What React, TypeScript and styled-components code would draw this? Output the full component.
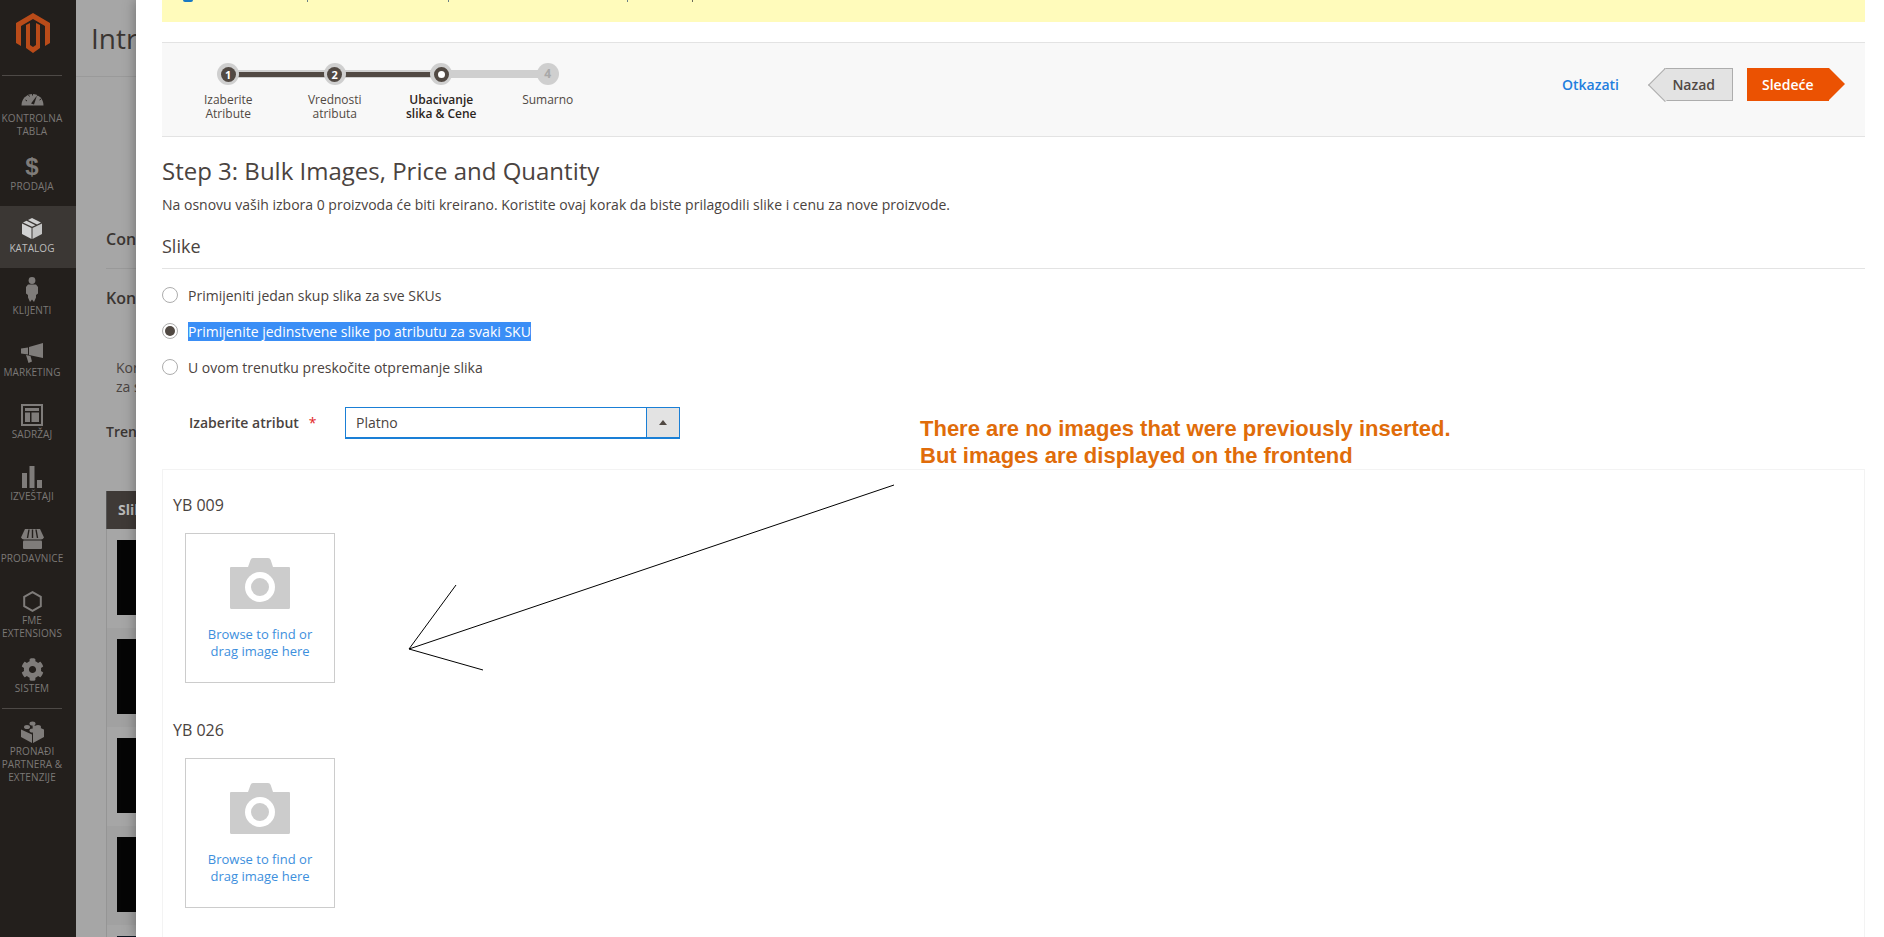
import React from "react";
import styled, { createGlobalStyle } from "styled-components";
import { FaCog } from "react-icons/fa";

const Global = createGlobalStyle`
  html, body { margin: 0; padding: 0; height: 937px; overflow: hidden; background: #fff; }
  * { box-sizing: border-box; }
  body { font-family: "Open Sans", "Noto Sans", sans-serif; color: #4a4340; }
`;

const Root = styled.div`
  position: relative;
  display: flex;
  width: 1884px;
  height: 937px;
  overflow: hidden;
`;

/* ---------- sidebar ---------- */
const Sidebar = styled.nav`
  width: 76px;
  flex: none;
  background: #231f1c;
  display: flex;
  flex-direction: column;
`;
const LogoBox = styled.div`
  height: 75px;
  padding: 13px 0 0 15px;
`;
const Divider = styled.div`
  height: 1px;
  margin: 0 14px 0 2px;
  background: #4d4946;
`;
const NavItem = styled.div<{ $active?: boolean; $tall?: boolean }>`
  height: ${(p) => (p.$tall ? 68 : 62)}px;
  width: 76px;
  flex: none;
  padding: 10px 12px 0 0;
  background: ${(p) => (p.$active ? "#3b3734" : "transparent")};
  color: ${(p) => (p.$active ? "#bdbdbd" : "#7b7876")};
  text-align: center;
  font-size: 10px;
  line-height: 13px;
  letter-spacing: 0.1px;
`;
const NavIcon = styled.div<{ $shift?: number }>`
  height: 26px;
  display: flex;
  align-items: center;
  justify-content: center;
  transform: translateY(${(p) => p.$shift ?? 0}px);
`;
const Dollar = styled.span`
  font-family: "Liberation Sans", sans-serif;
  font-weight: 700;
  font-size: 24px;
  line-height: 26px;
  color: #7f7c7a;
`;

/* ---------- dim page behind ---------- */
const Behind = styled.div`
  width: 60px;
  flex: none;
  background: #a6a6a6;
  overflow: hidden;
  color: #3a3532;
  white-space: nowrap;
`;
const BehindHeader = styled.div`
  height: 77px;
  padding: 18px 0 0 15px;
  border-bottom: 1px solid #9a9a9a;
  font-size: 28px;
  line-height: 40px;
`;
const BehindBold = styled.div<{ $first?: boolean }>`
  padding-left: 30px;
  margin-top: ${(p) => (p.$first ? 150 : 0)}px;
  font-weight: 600;
  font-size: 16px;
  line-height: 24px;
`;
const BehindRule = styled.div`
  margin: 17px 0 17px 30px;
  height: 1px;
  background: #999;
`;
const BehindText = styled.div`
  padding-left: 40px;
  margin-top: 48px;
  font-size: 14px;
  line-height: 19px;
  color: #4a4441;
`;
const BehindSub = styled.div`
  padding-left: 30px;
  margin-top: 26px;
  font-weight: 600;
  font-size: 14px;
  line-height: 20px;
`;
const BehindHead = styled.div`
  margin: 49px 0 0 30px;
  height: 38px;
  padding: 9px 0 0 11px;
  background: #3f3a37;
  border-left: 1px solid #555;
  color: #b9b9b9;
  font-size: 14px;
  font-weight: 700;
  line-height: 20px;
`;
const BehindRow = styled.div<{ $alt?: boolean }>`
  margin-left: 30px;
  height: 99px;
  padding: 11px 0 0 10px;
  border-left: 1px solid #959595;
  background: ${(p) => (p.$alt ? "#a1a1a1" : "#a6a6a6")};
`;
const BehindThumb = styled.div<{ $navy?: boolean }>`
  width: 60px;
  height: 75px;
  background: ${(p) => (p.$navy ? "#0c1520" : "#050505")};
`;

/* ---------- modal ---------- */
const Modal = styled.main`
  flex: 1;
  min-width: 0;
  background: #fff;
  padding: 0 19px 0 26px;
  box-shadow: 0 0 12px rgba(0, 0, 0, 0.35);
  z-index: 1;
`;
const Banner = styled.div`
  position: relative;
  height: 22px;
  background: #fffbbb;
`;
const BannerMark = styled.i<{ $x: number; $wide?: boolean; $c: string }>`
  position: absolute;
  top: 0;
  left: ${(p) => p.$x}px;
  width: ${(p) => (p.$wide ? 10 : 1)}px;
  height: 2px;
  background: ${(p) => p.$c};
  border-radius: ${(p) => (p.$wide ? "0 0 5px 5px" : 0)};
`;
const Wizard = styled.section`
  margin-top: 20px;
  height: 95px;
  background: #f8f8f8;
  border-top: 1px solid #e3e3e3;
  border-bottom: 1px solid #e3e3e3;
  display: flex;
  justify-content: space-between;
  padding: 20px 20px 0 13px;
`;
const Steps = styled.ol`
  display: flex;
  list-style: none;
  margin: 0;
  padding: 0;
`;
const Step = styled.li<{ $current?: boolean; $last?: boolean; $fill?: boolean }>`
  position: relative;
  width: 106.5px;
  display: flex;
  flex-direction: column;
  align-items: center;
  text-align: center;
  font-size: 12px;
  line-height: 14px;
  color: ${(p) => (p.$current ? "#2c2521" : "#514943")};
  font-weight: ${(p) => (p.$current ? 600 : 400)};
  &::before {
    content: "";
    display: ${(p) => (p.$last ? "none" : "block")};
    position: absolute;
    top: 7px;
    left: 50%;
    width: 100%;
    height: 8px;
    background: #cfcfcf;
  }
  &::after {
    content: "";
    display: ${(p) => (p.$fill ? "block" : "none")};
    position: absolute;
    top: 9px;
    left: 50%;
    width: 100%;
    height: 5px;
    background: #514943;
  }
`;
const Dot = styled.span`
  position: relative;
  z-index: 1;
  width: 22px;
  height: 22px;
  border-radius: 50%;
  background: #cfcfcf;
  display: flex;
  align-items: center;
  justify-content: center;
  margin-bottom: 8px;
`;
const DotInner = styled.span<{ $ring?: boolean }>`
  width: 15px;
  height: 15px;
  border-radius: 50%;
  background: ${(p) => (p.$ring ? "#fff" : "#514943")};
  border: ${(p) => (p.$ring ? "4px solid #514943" : "none")};
  color: #fff;
  font-size: 11px;
  line-height: 15px;
  font-weight: 700;
  text-align: center;
`;
const DotGhost = styled.span`
  color: #a8a8a8;
  font-size: 12px;
  font-weight: 700;
  line-height: 22px;
`;
const Actions = styled.div`
  display: flex;
  align-items: center;
  height: 33px;
  margin-top: 5px;
`;
const CancelLink = styled.a`
  color: #1f7ede;
  font-size: 14px;
  font-weight: 600;
  margin-right: 45px;
`;
const BackBtn = styled.div`
  position: relative;
  width: 69px;
  height: 33px;
  margin-right: 14px;
  background: #e3e3e3;
  border: 1px solid #adadad;
  border-left: none;
  color: #514943;
  font-size: 14px;
  font-weight: 600;
  line-height: 31px;
  text-align: right;
  padding-right: 17px;
  &::before {
    content: "";
    position: absolute;
    left: -11px;
    top: 4px;
    width: 23px;
    height: 23px;
    background: #e3e3e3;
    border-left: 1px solid #adadad;
    border-bottom: 1px solid #adadad;
    transform: rotate(45deg);
  }
`;
const BackLabel = styled.span`
  position: relative;
`;
const NextBtn = styled.div`
  position: relative;
  width: 82px;
  height: 33px;
  margin-right: 16px;
  background: #eb5202;
  color: #fff;
  font-size: 14px;
  font-weight: 600;
  line-height: 33px;
  padding-left: 15px;
  &::after {
    content: "";
    position: absolute;
    right: -16px;
    top: 0;
    border-left: 16px solid #eb5202;
    border-top: 16.5px solid transparent;
    border-bottom: 16.5px solid transparent;
  }
`;
const Heading = styled.h1`
  margin: 17px 0 0;
  font-size: 24px;
  line-height: 34px;
  font-weight: 400;
  color: #4a4340;
`;
const Lead = styled.p`
  margin: 7px 0 0;
  font-size: 14px;
  line-height: 20px;
`;
const SectionTitle = styled.h2`
  margin: 19px 0 0;
  padding-bottom: 10px;
  border-bottom: 1px solid #e3e3e3;
  font-size: 18px;
  line-height: 24px;
  font-weight: 400;
`;
const RadioList = styled.div`
  margin-top: 8px;
`;
const RadioRow = styled.div`
  height: 36px;
  display: flex;
  align-items: center;
  font-size: 14px;
`;
const Radio = styled.span<{ $on?: boolean }>`
  width: 16px;
  height: 16px;
  flex: none;
  border-radius: 50%;
  border: 1px solid #adadad;
  background: #fff;
  margin-right: 10px;
  display: flex;
  align-items: center;
  justify-content: center;
  &::after {
    content: "";
    display: ${(p) => (p.$on ? "block" : "none")};
    width: 10px;
    height: 10px;
    border-radius: 50%;
    background: #514943;
  }
`;
const Selected = styled.span`
  background: #3a8ef6;
  color: #fff;
  line-height: 19px;
`;
const AttrRow = styled.div`
  margin-top: 22px;
  display: flex;
  align-items: center;
  padding-left: 27px;
`;
const AttrLabel = styled.label`
  width: 156px;
  font-size: 14px;
  font-weight: 600;
`;
const Required = styled.span`
  color: #e22626;
  margin-left: 10px;
  font-weight: 400;
`;
const SelectBox = styled.div`
  width: 335px;
  height: 31px;
  border: 1px solid #1a7fd6;
  box-shadow: 0 1px 0 #1a7fd6;
  display: flex;
  align-items: center;
  font-size: 14px;
`;
const SelectValue = styled.span`
  flex: 1;
  padding-left: 10px;
`;
const SelectArrow = styled.span`
  width: 33px;
  height: 100%;
  background: #e3e3e3;
  border-left: 1px solid #1a7fd6;
  display: flex;
  align-items: center;
  justify-content: center;
  &::after {
    content: "";
    border-left: 4px solid transparent;
    border-right: 4px solid transparent;
    border-bottom: 5px solid #514943;
  }
`;
const Matrix = styled.section`
  margin-top: 31px;
  height: 500px;
  border: 1px solid #f3f3f3;
  padding: 24px 0 0 10px;
`;
const SkuTitle = styled.div<{ $next?: boolean }>`
  font-size: 16px;
  line-height: 22px;
  margin-top: ${(p) => (p.$next ? 36 : 0)}px;
`;
const Tile = styled.div`
  width: 150px;
  height: 150px;
  margin: 17px 0 0 12px;
  border: 1px solid #ccc;
  padding-top: 24px;
  display: flex;
  flex-direction: column;
  align-items: center;
  text-align: center;
  color: #3d8fdd;
  font-size: 13px;
  line-height: 17px;
`;
const TileText = styled.div`
  margin-top: 17px;
`;
const Annotation = styled.div`
  position: absolute;
  left: 920px;
  top: 415px;
  z-index: 3;
  font-family: "Liberation Sans", Arial, sans-serif;
  font-weight: 700;
  font-size: 22px;
  line-height: 27px;
  color: #e06c0a;
  white-space: nowrap;
`;
const ArrowLayer = styled.svg`
  position: absolute;
  left: 0;
  top: 0;
  z-index: 3;
  pointer-events: none;
`;

/* ---------- drawings ---------- */
const Logo = () => (
  <svg width="36" height="40" viewBox="0 0 36 40" fill="#b94b19">
    <path d="M18 0L35 10V30L30 33V13L18 6L6 13V33L1 30V10Z" />
    <path d="M11 12L15 10V32L18 34L21 32V10L25 12V35L18 40L11 35Z" />
  </svg>
);
const ic = "#7f7c7a";
const Gauge = () => (
  <svg width="23" height="17" viewBox="0 0 23 17">
    <path d="M0.5 16.5A11 11.5 0 0 1 22.5 16.5Z" fill={ic} />
    <path d="M10 14.5L16 6.5L13 15.5Z" fill="#231f1c" />
    <path d="M4.5 11L6 12M7.5 6l1 1.5M11.5 4.5v2M16.5 7l1-1.5M18.5 11l1.5-1" stroke="#231f1c" strokeWidth="1" />
  </svg>
);
const BoxIcon = () => (
  <svg width="20" height="21" viewBox="0 0 20 21">
    <path d="M0 5.5L9.5 10V21L0 16Z" fill="#d2d2d2" />
    <path d="M20 5.5L10.5 10V21L20 16Z" fill="#c4c4c4" />
    <path d="M10 0L6 2L15 6.5L19 4.5ZM4.5 2.7L1 4.5L10 8.8L13.5 7.2Z" fill="#cfcfcf" />
  </svg>
);
const Person = () => (
  <svg width="12" height="25" viewBox="0 0 12 25" fill={ic}>
    <circle cx="6" cy="3.5" r="3.4" />
    <path d="M2 7.5H10L12 10V16.5L10 18V20.5L8 25L6 22.5L4 25L2 20.5V18L0 16.5V10Z" />
  </svg>
);
const Megaphone = () => (
  <svg width="22" height="20" viewBox="0 0 22 20" fill={ic}>
    <path d="M22 0V15L8 12V4Z" />
    <path d="M0 5.5L7 4.5V11.5L0 10.5Z" />
    <path d="M5 12L9.5 13L11 18.5L7.5 20Z" />
  </svg>
);
const Layout = () => (
  <svg width="22" height="22" viewBox="0 0 22 22" fill="none" stroke={ic}>
    <rect x="1" y="1" width="20" height="20" strokeWidth="2" />
    <rect x="4" y="4" width="14" height="3" fill={ic} stroke="none" />
    <rect x="4" y="8.5" width="5" height="9.5" fill={ic} stroke="none" />
    <rect x="10.5" y="8.5" width="7.5" height="9.5" fill={ic} stroke="none" />
  </svg>
);
const Bars = () => (
  <svg width="20" height="22" viewBox="0 0 20 22" fill={ic}>
    <rect x="0" y="7" width="5" height="15" />
    <rect x="7.5" y="0" width="5" height="22" />
    <rect x="15" y="14" width="5" height="8" />
  </svg>
);
const Store = () => (
  <svg width="23" height="20" viewBox="0 0 23 20" fill={ic}>
    <path d="M4 0H19L23 8.5Q22 10.5 20 10.5H3Q1 10.5 0 8.5Z" />
    <path d="M8 0.5L6.5 9M11.5 0.5V9M15 0.5L16.5 9" stroke="#231f1c" strokeWidth="1.4" fill="none" />
    <rect x="2" y="11.5" width="19" height="8.5" rx="1" />
  </svg>
);
const Hexagon = () => (
  <svg width="19" height="21" viewBox="0 0 19 21" fill="none" stroke={ic} strokeWidth="2">
    <path d="M9.5 1.2L17.8 5.9V15.1L9.5 19.8L1.2 15.1V5.9Z" />
  </svg>
);
const Lego = () => (
  <svg width="23" height="22" viewBox="0 0 23 22" fill={ic}>
    <path d="M11.5 3.5L23 8.5V16L12 22V13.5Z" />
    <path d="M0 8.5V16L11 22V13.5Z" />
    <ellipse cx="11.5" cy="2.5" rx="3" ry="2" />
    <ellipse cx="6" cy="6" rx="3" ry="2" />
    <ellipse cx="17" cy="6" rx="3" ry="2" />
    <ellipse cx="11.5" cy="9.5" rx="3" ry="2" />
  </svg>
);
const Camera = () => (
  <svg width="60" height="51" viewBox="0 0 60 51">
    <path d="M1 9H18L20.5 2Q21.2 0 23 0H38Q40 0 40.7 2L43 9H59Q60 9 60 10V49.5Q60 51 58.5 51H1.5Q0 51 0 49.5V10Q0 9 1 9Z" fill="#ccc" />
    <circle cx="30" cy="29" r="15" fill="#fff" />
    <circle cx="30" cy="29" r="9" fill="#ccc" />
  </svg>
);

const nav: { label: React.ReactNode; icon: React.ReactNode; tall?: boolean; active?: boolean; shift?: number }[] = [
  { label: <>KONTROLNA<br />TABLA</>, icon: <Gauge />, tall: true, shift: -2 },
  { label: "PRODAJA", icon: <Dollar>$</Dollar> },
  { label: "KATALOG", icon: <BoxIcon />, active: true, shift: -1 },
  { label: "KLIJENTI", icon: <Person />, shift: -2 },
  { label: "MARKETING", icon: <Megaphone />, shift: 0 },
  { label: "SADRŽAJ", icon: <Layout />, shift: 0 },
  { label: "IZVEŠTAJI", icon: <Bars />, shift: 0 },
  { label: "PRODAVNICE", icon: <Store />, shift: 0 },
  { label: <>FME<br />EXTENSIONS</>, icon: <Hexagon />, tall: true },
  { label: "SISTEM", icon: <FaCog size={23} color={ic} />, shift: 0 },
];

const skus = ["YB 009", "YB 026"];

function NavRow({ label, icon, tall, active, shift }: { label: React.ReactNode; icon: React.ReactNode; tall?: boolean; active?: boolean; shift?: number }) {
  return (
    <NavItem $tall={tall} $active={active}>
      <NavIcon $shift={shift}>{icon}</NavIcon>
      {label}
    </NavItem>
  );
}

export default function App() {
  return (
    <Root>
      <Global />
      <Sidebar>
        <LogoBox><Logo /></LogoBox>
        <Divider />
        {nav.map((n, i) => (
          <NavRow key={i} {...n} />
        ))}
        <Divider />
        <NavRow label={<>PRONAĐI<br />PARTNERA &amp;<br />EXTENZIJE</>} icon={<Lego />} tall />
      </Sidebar>

      <Behind>
        <BehindHeader>Intr</BehindHeader>
        <BehindBold $first>Con</BehindBold>
        <BehindRule />
        <BehindBold>Kon</BehindBold>
        <BehindText>Kor<br />za s</BehindText>
        <BehindSub>Tren</BehindSub>
        <BehindHead>Slik</BehindHead>
        <BehindRow><BehindThumb /></BehindRow>
        <BehindRow $alt><BehindThumb /></BehindRow>
        <BehindRow><BehindThumb /></BehindRow>
        <BehindRow $alt><BehindThumb /></BehindRow>
        <BehindRow><BehindThumb $navy /></BehindRow>
      </Behind>

      <Modal>
        <Banner>
          <BannerMark $x={21} $wide $c="#1979c3" />
          <BannerMark $x={145} $c="#6a7f86" />
          <BannerMark $x={286} $c="#6a7f86" />
          <BannerMark $x={465} $c="#6a7f86" />
          <BannerMark $x={530} $c="#6a6a5a" />
        </Banner>
        <Wizard>
          <Steps>
            <Step $fill>
              <Dot><DotInner>1</DotInner></Dot>
              <span>Izaberite<br />Atribute</span>
            </Step>
            <Step $fill>
              <Dot><DotInner>2</DotInner></Dot>
              <span>Vrednosti<br />atributa</span>
            </Step>
            <Step $current>
              <Dot><DotInner $ring /></Dot>
              <span>Ubacivanje<br />slika &amp; Cene</span>
            </Step>
            <Step $last>
              <Dot><DotGhost>4</DotGhost></Dot>
              <span>Sumarno</span>
            </Step>
          </Steps>
          <Actions>
            <CancelLink>Otkazati</CancelLink>
            <BackBtn><BackLabel>Nazad</BackLabel></BackBtn>
            <NextBtn>Sledeće</NextBtn>
          </Actions>
        </Wizard>
        <Heading>Step 3: Bulk Images, Price and Quantity</Heading>
        <Lead>Na osnovu vaših izbora 0 proizvoda će biti kreirano. Koristite ovaj korak da biste prilagodili slike i cenu za nove proizvode.</Lead>
        <SectionTitle>Slike</SectionTitle>
        <RadioList>
          <RadioRow><Radio />Primijeniti jedan skup slika za sve SKUs</RadioRow>
          <RadioRow><Radio $on /><Selected>Primijenite jedinstvene slike po atributu za svaki SKU</Selected></RadioRow>
          <RadioRow><Radio />U ovom trenutku preskočite otpremanje slika</RadioRow>
        </RadioList>
        <AttrRow>
          <AttrLabel>Izaberite atribut<Required>*</Required></AttrLabel>
          <SelectBox>
            <SelectValue>Platno</SelectValue>
            <SelectArrow />
          </SelectBox>
        </AttrRow>
        <Matrix>
          {skus.map((s, i) => (
            <div key={s}>
              <SkuTitle $next={i > 0}>{s}</SkuTitle>
              <Tile>
                <Camera />
                <TileText>Browse to find or<br />drag image here</TileText>
              </Tile>
            </div>
          ))}
        </Matrix>
      </Modal>

      <Annotation>
        There are no images that were previously inserted.<br />
        But images are displayed on the frontend
      </Annotation>
      <ArrowLayer width="1884" height="937" viewBox="0 0 1884 937" fill="none" stroke="#000" strokeWidth="1">
        <path d="M894 485L409 649L456 585" />
        <path d="M409 649L483 670" />
      </ArrowLayer>
    </Root>
  );
}
